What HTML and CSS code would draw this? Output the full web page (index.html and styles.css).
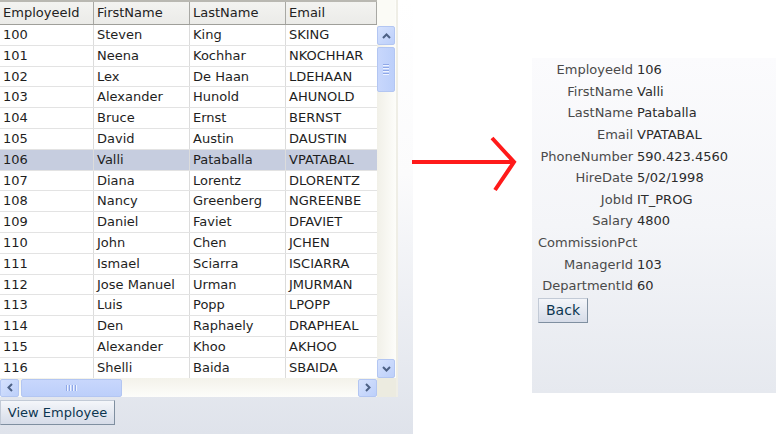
FILE: index.html
```html
<!DOCTYPE html>
<html>
<head>
<meta charset="utf-8">
<link rel="stylesheet" href="styles.css">
</head>
<body>
<div class="left">
  <div class="grid">
    <div class="table">
      <div class="row head">
        <div class="cell">EmployeeId</div><div class="cell">FirstName</div><div class="cell">LastName</div><div class="cell">Email</div>
      </div>
      <div class="row"><div class="cell">100</div><div class="cell">Steven</div><div class="cell">King</div><div class="cell">SKING</div></div>
      <div class="row"><div class="cell">101</div><div class="cell">Neena</div><div class="cell">Kochhar</div><div class="cell">NKOCHHAR</div></div>
      <div class="row"><div class="cell">102</div><div class="cell">Lex</div><div class="cell">De Haan</div><div class="cell">LDEHAAN</div></div>
      <div class="row"><div class="cell">103</div><div class="cell">Alexander</div><div class="cell">Hunold</div><div class="cell">AHUNOLD</div></div>
      <div class="row"><div class="cell">104</div><div class="cell">Bruce</div><div class="cell">Ernst</div><div class="cell">BERNST</div></div>
      <div class="row"><div class="cell">105</div><div class="cell">David</div><div class="cell">Austin</div><div class="cell">DAUSTIN</div></div>
      <div class="row sel"><div class="cell">106</div><div class="cell">Valli</div><div class="cell">Pataballa</div><div class="cell">VPATABAL</div></div>
      <div class="row"><div class="cell">107</div><div class="cell">Diana</div><div class="cell">Lorentz</div><div class="cell">DLORENTZ</div></div>
      <div class="row"><div class="cell">108</div><div class="cell">Nancy</div><div class="cell">Greenberg</div><div class="cell">NGREENBE</div></div>
      <div class="row"><div class="cell">109</div><div class="cell">Daniel</div><div class="cell">Faviet</div><div class="cell">DFAVIET</div></div>
      <div class="row"><div class="cell">110</div><div class="cell">John</div><div class="cell">Chen</div><div class="cell">JCHEN</div></div>
      <div class="row"><div class="cell">111</div><div class="cell">Ismael</div><div class="cell">Sciarra</div><div class="cell">ISCIARRA</div></div>
      <div class="row"><div class="cell">112</div><div class="cell">Jose Manuel</div><div class="cell">Urman</div><div class="cell">JMURMAN</div></div>
      <div class="row"><div class="cell">113</div><div class="cell">Luis</div><div class="cell">Popp</div><div class="cell">LPOPP</div></div>
      <div class="row"><div class="cell">114</div><div class="cell">Den</div><div class="cell">Raphaely</div><div class="cell">DRAPHEAL</div></div>
      <div class="row"><div class="cell">115</div><div class="cell">Alexander</div><div class="cell">Khoo</div><div class="cell">AKHOO</div></div>
      <div class="row"><div class="cell">116</div><div class="cell">Shelli</div><div class="cell">Baida</div><div class="cell">SBAIDA</div></div>
    </div>
    <div class="vscroll">
      <div class="vspacer"></div>
      <div class="sbtn v"><svg width="9" height="6" viewBox="0 0 9 6"><path d="M1 5 L4.5 1.5 L8 5" fill="none" stroke="#4d6185" stroke-width="2"/></svg></div>
      <div class="vthumb"><span></span><span></span><span></span><span></span></div>
      <div class="vtrack"></div>
      <div class="sbtn v"><svg width="9" height="6" viewBox="0 0 9 6"><path d="M1 1 L4.5 4.5 L8 1" fill="none" stroke="#4d6185" stroke-width="2"/></svg></div>
    </div>
    <div class="hscroll">
      <div class="sbtn h"><svg width="6" height="9" viewBox="0 0 6 9"><path d="M5 1 L1.5 4.5 L5 8" fill="none" stroke="#4d6185" stroke-width="2"/></svg></div>
      <div class="hthumb"><span></span><span></span><span></span><span></span></div>
      <div class="htrack"></div>
      <div class="sbtn h"><svg width="6" height="9" viewBox="0 0 6 9"><path d="M1 1 L4.5 4.5 L1 8" fill="none" stroke="#4d6185" stroke-width="2"/></svg></div>
    </div>
    <div class="corner"></div>
  </div>
  <div class="actions"><button class="btn view">View Employee</button></div>
</div>
<div class="middle">
  <svg class="arrow" width="106" height="58" viewBox="0 0 106 58">
    <path d="M0 27 L101 27" stroke="#ff1a1a" stroke-width="4" fill="none"/>
    <path d="M80 3 L102 27 L83 55" stroke="#ff1a1a" stroke-width="4" fill="none"/>
  </svg>
</div>
<div class="detail">
  <div class="form">
    <div class="lbl">EmployeeId</div><div class="val">106</div>
    <div class="lbl">FirstName</div><div class="val">Valli</div>
    <div class="lbl">LastName</div><div class="val">Pataballa</div>
    <div class="lbl">Email</div><div class="val">VPATABAL</div>
    <div class="lbl">PhoneNumber</div><div class="val">590.423.4560</div>
    <div class="lbl">HireDate</div><div class="val">5/02/1998</div>
    <div class="lbl">JobId</div><div class="val">IT_PROG</div>
    <div class="lbl">Salary</div><div class="val">4800</div>
    <div class="lbl">CommissionPct</div><div class="val"></div>
    <div class="lbl">ManagerId</div><div class="val">103</div>
    <div class="lbl">DepartmentId</div><div class="val">60</div>
  </div>
  <button class="btn back">Back</button>
</div>
</body>
</html>
```

FILE: styles.css
```css
html, body {
  margin: 0;
  padding: 0;
}
body {
  width: 776px;
  height: 434px;
  overflow: hidden;
  display: flex;
  align-items: flex-start;
  background: #ffffff;
  font-family: "DejaVu Sans", "Liberation Sans", sans-serif;
  font-size: 13px;
  color: #1e1e1e;
}
.left {
  width: 413px;
  height: 434px;
  display: flex;
  flex-direction: column;
  background: linear-gradient(#ffffff 0%, #fbfbfc 40%, #dfe3eb 100%);
}
.grid {
  width: 396px;
  height: 397px;
  display: grid;
  grid-template-columns: 377px 19px;
  grid-template-rows: 378px 19px;
  border-right: 2px solid #efeee6;
  background: #ffffff;
}
.table {
  overflow: hidden;
  background: #ffffff;
}
.row {
  display: grid;
  grid-template-columns: 94px 96px 96px 91px;
  height: 20.8px;
  box-sizing: border-box;
  border-bottom: 1px solid #e3e3e3;
}
.row .cell {
  padding-left: 3px;
  line-height: 20px;
  white-space: nowrap;
  overflow: hidden;
  border-right: 1px solid #dcdcdc;
  box-sizing: border-box;
}
.row .cell:last-child {
  border-right: none;
}
.row.head {
  height: 25px;
  background: linear-gradient(#f3f3f1, #ebebe8);
  border-top: 2px solid #b9b8b2;
  border-bottom: 1px solid #9f9f9a;
}
.row.head .cell {
  line-height: 21px;
  border-right: 1px solid #a8a8a4;
  color: #222;
}
.row.sel {
  background: #c6cddf;
}
.vscroll {
  display: flex;
  flex-direction: column;
  background: linear-gradient(90deg, #f1f0e8, #fdfdfa);
  padding: 0 1px 0 0;
}
.vspacer {
  height: 26px;
  background: #fbfbf6;
}
.sbtn {
  box-sizing: border-box;
  border: 1px solid #b3c6f2;
  border-radius: 2px;
  background: linear-gradient(135deg, #d6e2fd, #bccffa);
  display: flex;
  align-items: center;
  justify-content: center;
  flex: none;
}
.sbtn.v {
  width: 18px;
  height: 19px;
}
.sbtn.h {
  width: 19px;
  height: 18px;
}
.vthumb {
  margin-top: 2px;
  width: 18px;
  height: 45px;
  box-sizing: border-box;
  border: 1px solid #b3c6f2;
  border-radius: 2px;
  background: linear-gradient(90deg, #c8d7fc, #bccffa);
  display: flex;
  flex-direction: column;
  align-items: center;
  justify-content: center;
  gap: 1px;
  flex: none;
}
.vthumb span {
  display: block;
  width: 6px;
  height: 1px;
  background: #8fa8e8;
  border-bottom: 1px solid #eef3ff;
}
.vtrack {
  flex: 1;
}
.hscroll {
  display: flex;
  align-items: center;
  background: linear-gradient(#f3f2ea, #fdfdfa);
}
.hthumb {
  margin-left: 2px;
  width: 101px;
  height: 18px;
  box-sizing: border-box;
  border: 1px solid #b3c6f2;
  border-radius: 2px;
  background: linear-gradient(#c8d7fc, #bccffa);
  display: flex;
  align-items: center;
  justify-content: center;
  gap: 1px;
  flex: none;
}
.hthumb span {
  display: block;
  width: 1px;
  height: 6px;
  background: #8fa8e8;
  border-right: 1px solid #eef3ff;
}
.htrack {
  flex: 1;
}
.corner {
  background: #ecebe0;
}
.actions {
  padding-top: 3px;
}
.btn {
  font-family: "DejaVu Sans", "Liberation Sans", sans-serif;
  font-size: 13px;
  color: #0c3650;
  background: linear-gradient(#f4f6fa, #d6dce8);
  border: 1px solid #7f8fa0;
  border-top-color: #c2cad6;
  border-left-color: #c2cad6;
  border-radius: 0;
  padding: 0;
  margin: 0;
}
.btn.view {
  width: 115px;
  height: 25px;
}
.middle {
  width: 119px;
  display: flex;
}
.arrow {
  margin-top: 135px;
  margin-left: -1px;
}
.detail {
  width: 244px;
  height: 335px;
  margin-top: 58px;
  box-sizing: border-box;
  padding: 1px 0 0 6px;
  background: linear-gradient(#fbfbfd 0%, #f4f5f8 50%, #e6e9ef 100%);
}
.form {
  display: grid;
  grid-template-columns: 95px auto;
  grid-auto-rows: 21.6px;
  column-gap: 4px;
  align-items: center;
}
.lbl {
  text-align: right;
  color: #4a4a4a;
  white-space: nowrap;
}
.val {
  color: #2c2c2c;
  white-space: nowrap;
}
.btn.back {
  width: 50px;
  height: 25px;
  margin-top: 1px;
  font-size: 14px;
}
```
